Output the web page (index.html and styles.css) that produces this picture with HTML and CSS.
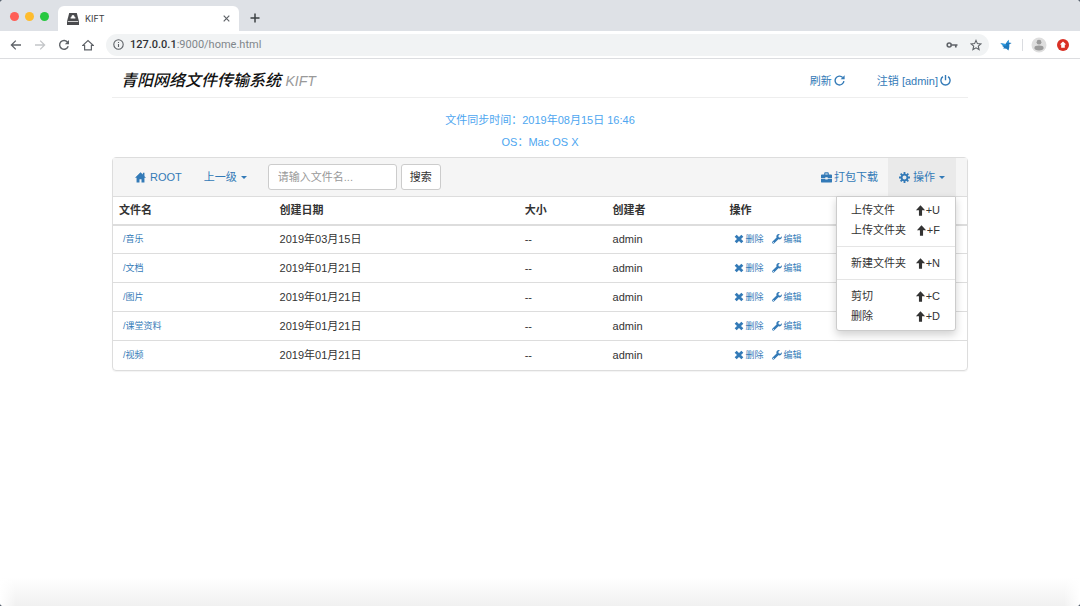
FILE: index.html
```
<!DOCTYPE html>
<html lang="zh-CN">
<head>
    <meta charset="UTF-8">
    <meta name="viewport" content="width=device-width, initial-scale=1.0">
    <title>KIFT</title>
    <link rel="stylesheet" href="styles.css">
</head>

<body>
    <!-- Icons -->
    <svg class="sprite" aria-hidden="true">
        <symbol id="i-home" viewBox="0 0 12 12">
            <path d="M6 .2 0 6.200h1.700v5.200h3.200V7.800h2.200v3.600h3.200V6.200H12L10.300 4.500V.8H8.600v2z" fill="currentColor"/>
        </symbol>
        <symbol id="i-case" viewBox="0 0 12 12">
            <path d="M3.500 2.600V1.400c0-.6.4-1 1-1h3c.6 0 1 .4 1 1v1.200H11c.6 0 1 .4 1 1v3H7.300v-.8H4.700v.8H0v-3c0-.6.4-1 1-1zm1.200 0h2.600V1.500H4.700zM0 7.400h4.700v.7h2.600v-.7H12v3.100c0 .6-.4 1-1 1H1c-.6 0-1-.4-1-1z" fill="currentColor"/>
        </symbol>
        <symbol id="i-cog" viewBox="0 0 12 12">
            <circle cx="6" cy="6" r="3.200" fill="none" stroke="currentColor" stroke-width="2"/>
            <path d="M6 0v2.400M6 9.600V12M0 6h2.400M9.600 6H12M1.800 1.800l1.600 1.600M8.600 8.600l1.600 1.600M10.200 1.800 8.600 3.400M3.400 8.600l-1.600 1.600" stroke="currentColor" stroke-width="2"/>
        </symbol>
        <symbol id="i-remove" viewBox="0 0 12 12">
            <path d="m2 2 8 8M10 2l-8 8" stroke="currentColor" stroke-width="3.400"/>
        </symbol>
        <symbol id="i-wrench" viewBox="0 0 12 12">
            <path d="M11.800 2.600 9.900 4.400 8 4 7.600 2.100 9.400.3C8.300-.2 7-.1 6.100.8c-.9.9-1.100 2.200-.6 3.300L.6 9c-.6.6-.6 1.500 0 2.100s1.500.6 2.100 0l5-4.800c1.200.4 2.400.2 3.300-.7.8-.8 1.100-1.900.8-3zM1.700 10.700a.6.6 0 1 1 0-1.200.6.6 0 0 1 0 1.200z" fill="currentColor"/>
        </symbol>
        <symbol id="i-refresh" viewBox="0 0 12 12">
            <path d="M9.500 2.700A4.800 4.800 0 1 0 10.800 6.600" fill="none" stroke="currentColor" stroke-width="1.500"/>
            <path d="M11.600.3v4.400H7.200z" fill="currentColor"/>
        </symbol>
        <symbol id="i-off" viewBox="0 0 12 12">
            <path d="M3.200 1.800a5 5 0 1 0 5.600 0M6 0v5.600" fill="none" stroke="currentColor" stroke-width="1.500"/>
        </symbol>
        <symbol id="i-up" viewBox="0 0 12 12">
            <path d="M6 .2 1 5.800h3.300v6h3.400v-6H11z" fill="currentColor"/>
        </symbol>
    </svg>

    <div class="window">
        <!-- Browser tabs -->
        <div class="tabs">
            <div class="lights">
                <span class="light red"></span>
                <span class="light yellow"></span>
                <span class="light green"></span>
            </div>
            <div class="tab">
                <svg width="12" height="12" viewBox="0 0 12 12">
                    <path d="M2.200 0h7.600L12 8.400V12H0V8.400z" fill="#4a4b4e"/>
                    <path d="M3.600 5.500V4.200h.7C4.500 2.800 5.200 2 6 2s1.500.8 1.700 2.200h.7v1.300zM.8 8.300h10.400v.8H.8z" fill="#fff"/>
                </svg>
                <span class="tab-title">KIFT</span>
                <button type="button" aria-label="关闭标签页">
                    <svg width="7" height="7" viewBox="0 0 7 7"><path d="m.7.7 5.600 5.600M6.300.7.7 6.300" stroke="#5f6368" stroke-width="1.200"/></svg>
                </button>
            </div>
            <button type="button" class="new-tab" aria-label="新标签页">
                <svg width="10" height="10" viewBox="0 0 10 10"><path d="M5 .5v9M.5 5h9" stroke="#3c4043" stroke-width="1.500"/></svg>
            </button>
        </div>

        <!-- Browser toolbar -->
        <div class="browser-bar">
            <button type="button" aria-label="后退">
                <svg width="12" height="12" viewBox="0 0 12 12"><path d="M11 6H1.500M5.800 1.600 1.400 6l4.400 4.400" fill="none" stroke="#5f6368" stroke-width="1.300"/></svg>
            </button>
            <button type="button" aria-label="前进">
                <svg width="12" height="12" viewBox="0 0 12 12"><path d="M1 6h9.500M6.200 1.600 10.600 6l-4.400 4.400" fill="none" stroke="#c4c6c9" stroke-width="1.300"/></svg>
            </button>
            <button type="button" aria-label="重新加载">
                <svg width="12" height="12" viewBox="0 0 12 12"><path d="M9.700 3.400A4.400 4.400 0 1 0 10.200 7.300" fill="none" stroke="#5f6368" stroke-width="1.400"/><path d="M11 1v4.200H6.800z" fill="#5f6368"/></svg>
            </button>
            <button type="button" aria-label="主页">
                <svg width="12" height="12" viewBox="0 0 12 12"><path d="M.8 6.400 6 1.600l5.200 4.800H9.400v4.400H2.600V6.400z" fill="none" stroke="#5f6368" stroke-width="1.200"/></svg>
            </button>
            <div class="address">
                <svg width="11" height="11" viewBox="0 0 11 11"><circle cx="5.500" cy="5.500" r="4.700" fill="none" stroke="#5f6368" stroke-width="1.100"/><path d="M5.500 4.900V8M5.500 2.900V4" stroke="#5f6368" stroke-width="1.100"/></svg>
                <div class="url"><b>127.0.0.1</b>:9000/home.html</div>
                <svg width="12" height="12" viewBox="0 0 12 12"><circle cx="3.200" cy="6" r="2" fill="none" stroke="#5f6368" stroke-width="1.600"/><path d="M5.500 6H11.500M9.800 6v2.500" stroke="#5f6368" stroke-width="1.700"/></svg>
                <svg width="12" height="12" viewBox="0 0 12 12"><path d="m6 1.400 1.400 3.200 3.500.3-2.600 2.300.8 3.400L6 8.800l-3.100 1.800.8-3.400L1.100 4.900l3.500-.3z" fill="none" stroke="#5f6368" stroke-width="1.100"/></svg>
            </div>
            <svg class="bird" width="12" height="12" viewBox="0 0 12 12">
                <path d="M.4 4.200 5.400 5 8.600.8l.2 2.600L11.600 4 9.200 5.600c.4 2.200-.2 4.600-.8 6L6.400 9.800l-3.600-.6 1.400-1L1.800 6.800l1.400-.4z" fill="#1c78bd"/>
                <path d="M.4 4.200 5.400 5l1.400 1.400-3.600 0zM8.600.8l.2 2.600-2 1z" fill="#2f9be0"/>
            </svg>
            <span class="split"></span>
            <svg class="avatar" width="16" height="16" viewBox="0 0 16 16">
                <circle cx="8" cy="8" r="7.500" fill="#dedede"/>
                <circle cx="8" cy="5.200" r="2.400" fill="#9b9b9b"/>
                <ellipse cx="8" cy="11" rx="4.600" ry="2.400" fill="#9b9b9b"/>
            </svg>
            <svg width="12" height="12" viewBox="0 0 12 12">
                <circle cx="6" cy="6" r="6" fill="#d93025"/>
                <path d="M6 2.400 2.800 5.600h1.400v3.200h3.600V5.600h1.400z" fill="#fff"/>
            </svg>
        </div>

        <!-- File system page -->
        <main class="container">
            <header class="title-box">
                <h1>青阳网络文件传输系统 <small>KIFT</small></h1>
                <nav class="account">
                    <a href="#">刷新 <svg class="icon"><use href="#i-refresh"/></svg></a>
                    <a href="#">注销 [admin] <svg class="icon"><use href="#i-off"/></svg></a>
                </nav>
            </header>

            <div class="notice">
                <p>文件同步时间：2019年08月15日 16:46</p>
                <p>OS：Mac OS X</p>
            </div>

            <section class="panel">
                <div class="navbar">
                    <a class="nav-item root" href="#"><svg class="icon"><use href="#i-home"/></svg>ROOT</a>
                    <button type="button" class="nav-item">上一级<span class="caret"></span></button>
                    <form class="search">
                        <input type="text" id="keyword" aria-label="文件名" placeholder="请输入文件名...">
                        <button type="button">搜索</button>
                    </form>
                    <a class="nav-item download" href="#"><svg class="icon"><use href="#i-case"/></svg>打包下载</a>
                    <div class="dropdown">
                        <button type="button" class="nav-item open" aria-expanded="true"><svg class="icon"><use href="#i-cog"/></svg>操作<span class="caret"></span></button>
                        <ul class="menu">
                            <li><a href="#">上传文件<span><svg class="icon"><use href="#i-up"/></svg>+U</span></a></li>
                            <li><a href="#">上传文件夹<span><svg class="icon"><use href="#i-up"/></svg>+F</span></a></li>
                            <li class="divider"></li>
                            <li><a href="#">新建文件夹<span><svg class="icon"><use href="#i-up"/></svg>+N</span></a></li>
                            <li class="divider"></li>
                            <li><a href="#">剪切<span><svg class="icon"><use href="#i-up"/></svg>+C</span></a></li>
                            <li><a href="#">删除<span><svg class="icon"><use href="#i-up"/></svg>+D</span></a></li>
                        </ul>
                    </div>
                </div>

                <table>
                    <thead>
                        <tr>
                            <th class="col-name">文件名</th>
                            <th class="col-date">创建日期</th>
                            <th class="col-size">大小</th>
                            <th class="col-owner">创建者</th>
                            <th>操作</th>
                        </tr>
                    </thead>
                    <tbody>
                        <tr>
                            <td><a class="btn" href="#">/音乐</a></td>
                            <td>2019年03月15日</td>
                            <td>--</td>
                            <td>admin</td>
                            <td><div class="actions"><button type="button" class="btn"><svg><use href="#i-remove"/></svg>删除</button><button type="button" class="btn"><svg><use href="#i-wrench"/></svg>编辑</button></div></td>
                        </tr>
                        <tr>
                            <td><a class="btn" href="#">/文档</a></td>
                            <td>2019年01月21日</td>
                            <td>--</td>
                            <td>admin</td>
                            <td><div class="actions"><button type="button" class="btn"><svg><use href="#i-remove"/></svg>删除</button><button type="button" class="btn"><svg><use href="#i-wrench"/></svg>编辑</button></div></td>
                        </tr>
                        <tr>
                            <td><a class="btn" href="#">/图片</a></td>
                            <td>2019年01月21日</td>
                            <td>--</td>
                            <td>admin</td>
                            <td><div class="actions"><button type="button" class="btn"><svg><use href="#i-remove"/></svg>删除</button><button type="button" class="btn"><svg><use href="#i-wrench"/></svg>编辑</button></div></td>
                        </tr>
                        <tr>
                            <td><a class="btn" href="#">/课堂资料</a></td>
                            <td>2019年01月21日</td>
                            <td>--</td>
                            <td>admin</td>
                            <td><div class="actions"><button type="button" class="btn"><svg><use href="#i-remove"/></svg>删除</button><button type="button" class="btn"><svg><use href="#i-wrench"/></svg>编辑</button></div></td>
                        </tr>
                        <tr>
                            <td><a class="btn" href="#">/视频</a></td>
                            <td>2019年01月21日</td>
                            <td>--</td>
                            <td>admin</td>
                            <td><div class="actions"><button type="button" class="btn"><svg><use href="#i-remove"/></svg>删除</button><button type="button" class="btn"><svg><use href="#i-wrench"/></svg>编辑</button></div></td>
                        </tr>
                    </tbody>
                </table>
            </section>
        </main>

        <div class="bottom-shade"></div>
    </div>
</body>

</html>
```
FILE: styles.css
```
* {
    box-sizing: border-box;
}

body {
    margin: 0;
    background-color: #5c6673;
    font-family: "Liberation Sans", "Noto Sans CJK SC", sans-serif;
    font-size: 11px;
    line-height: 20px;
    color: #333;
}

.sprite {
    display: none;
}

svg {
    flex: none;
}

a {
    color: #337ab7;
    text-decoration: none;
}

button {
    padding: 0;
    border: none;
    background: none;
    font: inherit;
    color: #337ab7;
    cursor: pointer;
}

.window {
    display: flex;
    flex-direction: column;
    min-height: 100vh;
    border-radius: 4px;
    overflow: hidden;
    background-color: #fff;
}

/* Browser tabs */
.tabs {
    display: flex;
    align-items: flex-end;
    height: 31px;
    background-color: #dee1e6;
    font-family: Inter, sans-serif;
}

.lights {
    display: flex;
    gap: 6px;
    padding: 0 9px 10px 10px;
}

.light {
    width: 9px;
    height: 9px;
    border-radius: 50%;
}

.red {
    background-color: #ff5f57;
}

.yellow {
    background-color: #febc2e;
}

.green {
    background-color: #28c840;
}

.tab {
    display: flex;
    align-items: center;
    gap: 6px;
    width: 181px;
    height: 25px;
    padding: 0 9px;
    border-radius: 6px 6px 0 0;
    background-color: #fff;
}

.tab-title {
    flex: 1;
    font-size: 9px;
    color: #3c4043;
}

.tab button,
.new-tab {
    display: flex;
}

.new-tab {
    padding: 0 11px 8px;
}

/* Browser toolbar */
.browser-bar {
    display: flex;
    align-items: center;
    height: 28px;
    padding: 0 11px 0 10px;
    border-bottom: 1px solid #dcdde0;
}

.browser-bar button {
    display: flex;
    margin-right: 12px;
}

.address {
    flex: 1;
    display: flex;
    align-items: center;
    gap: 12px;
    height: 22px;
    padding: 0 7px;
    border-radius: 11px;
    background-color: #f1f3f4;
}

.url {
    flex: 1;
    margin-left: -6px;
    font-family: Roboto, sans-serif;
    font-size: 11px;
    color: #80868b;
}

.url b {
    font-weight: 500;
    color: #303236;
}

.bird {
    margin: 0 10px 0 11px;
}

.split {
    width: 1px;
    height: 12px;
    background-color: #dadce0;
}

.avatar {
    margin: 0 10px 0 8px;
}

/* Page header */
.container {
    width: 100%;
    max-width: 856px;
    margin: 0 auto;
}

.title-box {
    display: flex;
    justify-content: space-between;
    align-items: center;
    height: 39px;
    padding: 5px 17px 0 9px;
    border-bottom: 1px solid #eee;
}

h1 {
    margin: 0;
    font-size: 16px;
    font-weight: 500;
    font-style: italic;
    color: #111;
}

h1 small {
    font-size: 14px;
    color: #999;
}

.icon {
    width: 11px;
    height: 11px;
}

.account {
    display: flex;
    gap: 32px;
}

.account a {
    display: flex;
    align-items: center;
    gap: 2px;
}

.notice {
    padding: 12px 0 3px;
    text-align: center;
    color: #4da6f0;
}

.notice p {
    margin: 0 0 2px;
}

/* File list */
.panel {
    border: 1px solid #ddd;
    border-radius: 4px;
    box-shadow: 0 1px 1px rgba(0, 0, 0, 0.05);
}

.navbar {
    display: flex;
    align-items: center;
    height: 38px;
    padding: 0 11px;
    background-color: #f5f5f5;
}

.nav-item {
    display: flex;
    align-items: center;
    gap: 3px;
    height: 38px;
    padding: 0 11px;
}

.root {
    gap: 4px;
}

.caret {
    margin-left: 1px;
    border-top: 3px solid;
    border-left: 3px solid transparent;
    border-right: 3px solid transparent;
}

.search {
    display: flex;
    gap: 4px;
    margin-left: 10px;
}

.search input {
    width: 129px;
    height: 26px;
    padding: 0 9px;
    border: 1px solid #ccc;
    border-radius: 3px;
    font: inherit;
    color: #555;
}

.search input::placeholder {
    color: #999;
}

.search button {
    height: 26px;
    padding: 0 8px;
    border: 1px solid #ccc;
    border-radius: 3px;
    background-color: #fff;
    color: #333;
}

.download {
    margin-left: auto;
    gap: 2px;
    padding-right: 10px;
}

.dropdown {
    position: relative;
}

.open {
    background-color: #eaeaea;
}

.menu {
    position: absolute;
    top: 38px;
    right: 0;
    width: 120px;
    margin: 0;
    padding: 3px 0 4px;
    list-style: none;
    border: 1px solid #ccc;
    border-radius: 0 0 3px 3px;
    background-color: #fff;
    box-shadow: 0 4px 9px rgba(0, 0, 0, 0.18);
}

.menu a {
    display: flex;
    justify-content: space-between;
    padding: 0 15px 0 14px;
    color: #333;
}

.menu span {
    display: flex;
    align-items: center;
}

.menu .divider {
    height: 1px;
    margin: 6px 0;
    background-color: #e5e5e5;
}

table {
    width: 100%;
    table-layout: fixed;
    border-collapse: collapse;
}

th,
td {
    height: 29px;
    padding: 0 6px;
    border-top: 1px solid #ddd;
    text-align: left;
}

thead th {
    height: 28px;
    border-bottom: 2px solid #ddd;
}

/* Column shares of the table width */
.col-name {
    width: 18.8%;
}

.col-date {
    width: 28.7%;
}

.col-size {
    width: 10.3%;
}

.col-owner {
    width: 13.7%;
}

.actions {
    display: flex;
}

.btn {
    display: flex;
    align-items: center;
    gap: 2px;
    padding: 0 4px;
    font-size: 9px;
}

.btn svg {
    width: 10px;
    height: 10px;
}

/* Soft shade at the bottom of the window */
.bottom-shade {
    height: 28px;
    margin-top: auto;
    background: linear-gradient(to right, #fff, transparent 16px calc(100% - 16px), #fff), linear-gradient(#fff, #f1f1f1);
}
```
